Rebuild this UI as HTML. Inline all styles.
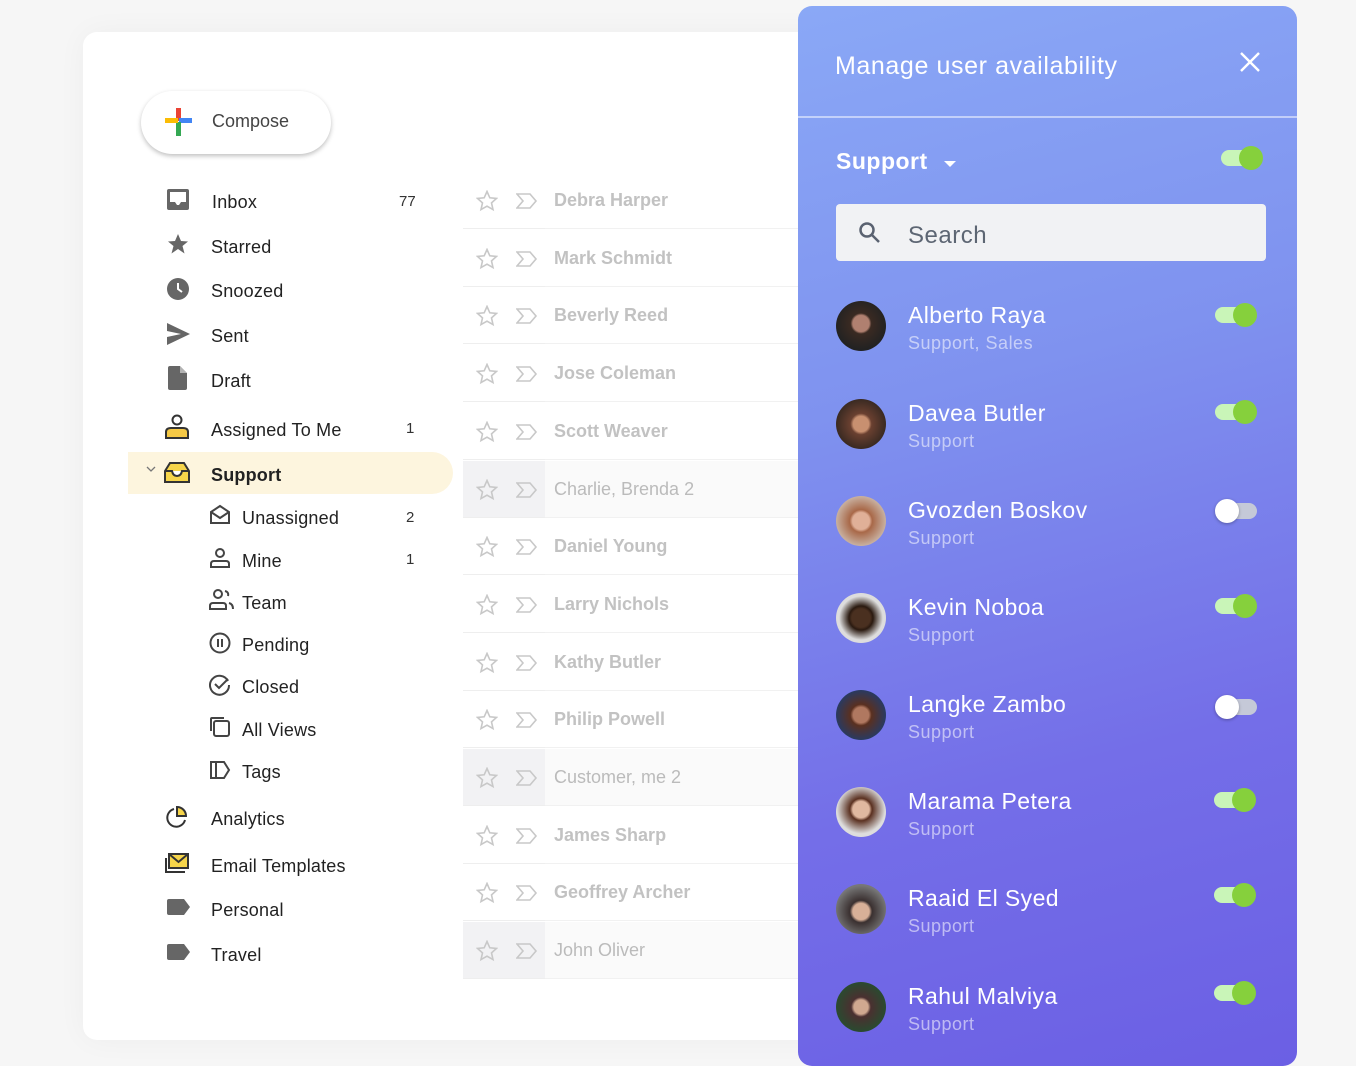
<!DOCTYPE html>
<html><head><meta charset="utf-8"><style>
*{box-sizing:border-box;margin:0;padding:0}
body{width:1356px;height:1062px;overflow:hidden;background:#f6f6f6;font-family:"Liberation Sans",Roboto,sans-serif;position:relative}
.card{position:absolute;left:83px;top:32px;width:760px;height:1008px;background:#fff;border-radius:14px;box-shadow:0 0 30px rgba(0,0,0,.04)}
.compose{position:absolute;left:141px;top:91px;width:190px;height:63px;border-radius:32px;background:#fff;box-shadow:0 2px 5px rgba(0,0,0,.25);font-size:18px;color:#444}
.compose span{position:absolute;left:71px;top:20px}
.nav{position:absolute;font-size:18px;color:#222;letter-spacing:.2px}
.ic{position:absolute}
.cnt{position:absolute;font-size:15px;color:#333}
.row{position:absolute;left:463px;width:335px;height:57px;border-bottom:1px solid #f1f1f1}
.row .l{position:absolute;left:0;top:0;width:82px;height:57px;border-bottom:1px solid #eee}
.row .t{position:absolute;left:91px;top:18px;font-size:18px;font-weight:bold;color:#c2c2c2}
.row.g{background:#fafafa}.row.g .l{background:#f2f2f4}.row.g .t{font-weight:normal;color:#bbb}
.panel{position:absolute;left:798px;top:6px;width:499px;height:1060px;border-radius:14px;background:linear-gradient(165deg,#8aa8f6 0%,#7f92ef 35%,#746ee8 70%,#6b5fe4 100%);overflow:hidden}
.user{position:absolute;left:38px;width:430px;height:60px}
.av{position:absolute;left:0;top:0;width:50px;height:50px;border-radius:50%;background:radial-gradient(circle at 50% 45%,#b08070 0 22%,#3a2a22 28%,#222 70%)}
.nm{position:absolute;left:72px;top:1px;font-size:23px;color:#fff;letter-spacing:.4px}
.sb{position:absolute;left:72px;top:31px;font-size:18px;color:rgba(255,255,255,.55);letter-spacing:.5px}
.tg{position:absolute;width:40px;height:16px;border-radius:8px;background:#c9f5b8}
.tg::after{content:"";position:absolute;right:-2px;top:-4px;width:24px;height:24px;border-radius:50%;background:#86d03c}
.tg.off{background:#c5c9d8}.tg.off::after{right:auto;left:-2px;background:#fff;box-shadow:0 1px 3px rgba(0,0,0,.3)}
</style></head><body>
<div class="card"></div>
<div class="compose">
<svg class="ic" style="left:24px;top:17px" width="28" height="28"><rect x="11" y="0" width="5" height="13" fill="#ea4335"/><rect x="14" y="10" width="13" height="5" fill="#4285f4"/><rect x="11" y="14" width="5" height="14" fill="#34a853"/><rect x="0" y="10" width="13" height="5" fill="#fbbc05"/></svg>
<span>Compose</span></div>

<div style="position:absolute;left:128px;top:452px;width:325px;height:42px;background:#fdf5de;border-radius:0 21px 21px 0"></div>

<svg class="ic" style="left:166px;top:188px" width="24" height="24"><rect x="1" y="1" width="22" height="21" rx="2" fill="#666"/><path d="M4 4h16v10h-5l-2 3h-2l-2-3H4z" fill="#fff"/></svg>
<div class="nav" style="left:212px;top:192px">Inbox</div><div class="cnt" style="left:399px;top:193px">77</div>
<svg class="ic" style="left:167px;top:233px" width="22" height="22"><path d="M11 1l3 7 7 .5-5.5 4.5 2 7.5L11 16l-6.5 4.5 2-7.5L1 8.5 8 8z" fill="#666"/></svg>
<div class="nav" style="left:211px;top:237px">Starred</div>
<svg class="ic" style="left:167px;top:278px" width="22" height="22"><circle cx="11" cy="11" r="11" fill="#666"/><path d="M11 5v6l4 3" stroke="#fff" stroke-width="2" fill="none"/></svg>
<div class="nav" style="left:211px;top:281px">Snoozed</div>
<svg class="ic" style="left:167px;top:323px" width="24" height="22"><path d="M0 0l23 11L0 22V14l14-3L0 8z" fill="#666"/></svg>
<div class="nav" style="left:211px;top:326px">Sent</div>
<svg class="ic" style="left:168px;top:366px" width="20" height="24"><path d="M0 2q0-2 2-2h10l7 7v15q0 2-2 2H2q-2 0-2-2z" fill="#666"/><path d="M12 0v7h7" fill="#fff" opacity=".5"/></svg>
<div class="nav" style="left:211px;top:371px">Draft</div>
<svg class="ic" style="left:164px;top:414px" width="26" height="26"><circle cx="13" cy="6" r="4.5" fill="none" stroke="#333" stroke-width="2"/><path d="M2 18q0-4 5-4h12q5 0 5 4v6H2z" fill="#f6c945" stroke="#333" stroke-width="2"/></svg>
<div class="nav" style="left:211px;top:420px">Assigned To Me</div><div class="cnt" style="left:406px;top:420px">1</div>
<svg class="ic" style="left:146px;top:466px" width="10" height="7"><path d="M1 1l4 4 4-4" stroke="#777" stroke-width="1.3" fill="none"/></svg>
<svg class="ic" style="left:163px;top:461px" width="28" height="24"><path d="M2 10l5-8h14l5 8v11H2z" fill="#f6d54a" stroke="#333" stroke-width="2"/><path d="M2 10h7q1 5 5 5t5-5h7" fill="#fff" stroke="#333" stroke-width="2"/></svg>
<div class="nav" style="left:211px;top:465px;font-weight:bold">Support</div>

<svg class="ic" style="left:209px;top:504px" width="22" height="22" fill="none" stroke="#444" stroke-width="2"><path d="M2 8l9-6 9 6v11H2z"/><path d="M2 8l9 6 9-6"/></svg>
<div class="nav" style="left:242px;top:508px">Unassigned</div><div class="cnt" style="left:406px;top:509px">2</div>
<svg class="ic" style="left:209px;top:548px" width="22" height="22" fill="none" stroke="#444" stroke-width="2"><circle cx="11" cy="5" r="4"/><path d="M2 19v-3q0-3 3-3h12q3 0 3 3v3z"/></svg>
<div class="nav" style="left:242px;top:551px">Mine</div><div class="cnt" style="left:406px;top:551px">1</div>
<svg class="ic" style="left:209px;top:589px" width="26" height="22" fill="none" stroke="#444" stroke-width="2"><circle cx="9" cy="5" r="4"/><path d="M1 20v-3q0-3 3-3h10q3 0 3 3v3z"/><path d="M16 2q4 1 3 5M20 14q4 1 4 6"/></svg>
<div class="nav" style="left:242px;top:593px">Team</div>
<svg class="ic" style="left:209px;top:632px" width="22" height="22" fill="none" stroke="#444" stroke-width="2"><circle cx="11" cy="11" r="9.5"/><path d="M9 7v8M13 7v8"/></svg>
<div class="nav" style="left:242px;top:635px">Pending</div>
<svg class="ic" style="left:209px;top:674px" width="22" height="22" fill="none" stroke="#444" stroke-width="2"><path d="M19 7A9.5 9.5 0 1 0 20 11"/><path d="M6 10l4 4 9-9"/></svg>
<div class="nav" style="left:242px;top:677px">Closed</div>
<svg class="ic" style="left:209px;top:716px" width="22" height="22" fill="none" stroke="#444" stroke-width="2"><rect x="5" y="5" width="15" height="15" rx="2"/><path d="M2 15V3q0-1 1-1h12"/></svg>
<div class="nav" style="left:242px;top:720px">All Views</div>
<svg class="ic" style="left:209px;top:760px" width="22" height="20" fill="none" stroke="#444" stroke-width="2"><path d="M2 2h13l5 8-5 8H2z"/><path d="M7 2v16"/></svg>
<div class="nav" style="left:242px;top:762px">Tags</div>
<svg class="ic" style="left:165px;top:805px" width="24" height="24"><path d="M12 2a9 9 0 0 1 9 9h-9z" fill="#f6d54a" stroke="#333" stroke-width="2"/><path d="M9 4A9 9 0 1 0 20 15" fill="none" stroke="#333" stroke-width="2"/></svg>
<div class="nav" style="left:211px;top:809px">Analytics</div>
<svg class="ic" style="left:164px;top:852px" width="26" height="22"><path d="M2 6v14h19" fill="none" stroke="#333" stroke-width="2"/><rect x="5" y="2" width="19" height="14" fill="#f6d54a" stroke="#333" stroke-width="2"/><path d="M5 2l9.5 8L24 2" fill="none" stroke="#333" stroke-width="2"/></svg>
<div class="nav" style="left:211px;top:856px">Email Templates</div>
<svg class="ic" style="left:167px;top:899px" width="24" height="18"><path d="M0 2q0-2 2-2h15l6 8-6 8H2q-2 0-2-2z" fill="#666"/></svg>
<div class="nav" style="left:211px;top:900px">Personal</div>
<svg class="ic" style="left:167px;top:944px" width="24" height="18"><path d="M0 2q0-2 2-2h15l6 8-6 8H2q-2 0-2-2z" fill="#666"/></svg>
<div class="nav" style="left:211px;top:945px">Travel</div>

<div id="rows"></div>
<script>
var n=["Debra Harper","Mark Schmidt","Beverly Reed","Jose Coleman","Scott Weaver","Charlie, Brenda 2","Daniel Young","Larry Nichols","Kathy Butler","Philip Powell","Customer, me 2","James Sharp","Geoffrey Archer","John Oliver"];
var g=[5,10,13],h="";
n.forEach(function(t,i){var y=172+i*57.7;h+='<div class="row'+(g.indexOf(i)>=0?' g':'')+'" style="top:'+y+'px"><div class="l"></div><svg style="position:absolute;left:13px;top:18px" width="22" height="22"><path d="M11 1.5l2.8 6.3 6.7.6-5 4.5 1.5 6.7L11 16.2l-6 3.4 1.5-6.7-5-4.5 6.7-.6z" fill="none" stroke="#c8c8c8" stroke-width="1.6"/></svg><svg style="position:absolute;left:53px;top:21px" width="22" height="16"><path d="M1 1h13l6 7-6 7H1l6-7z" fill="none" stroke="#c8c8c8" stroke-width="1.6"/></svg><div class="t">'+t+'</div></div>'});
document.getElementById("rows").innerHTML=h;
</script>

<div class="panel">
<div style="position:absolute;left:37px;top:46px;font-size:25px;color:#fff;letter-spacing:.6px">Manage user availability</div>
<svg style="position:absolute;left:442px;top:46px" width="20" height="20" stroke="#fff" stroke-width="2.4"><path d="M1 1l18 18M19 1L1 19"/></svg>
<div style="position:absolute;left:0;top:110px;width:499px;height:2px;background:rgba(255,255,255,.5)"></div>
<div style="position:absolute;left:38px;top:142px;font-size:23px;font-weight:bold;color:#fff;letter-spacing:.5px">Support</div>
<div style="position:absolute;left:146px;top:155px;border-left:6px solid transparent;border-right:6px solid transparent;border-top:6px solid #fff"></div>
<div class="tg" style="left:423px;top:144px"></div>
<div style="position:absolute;left:38px;top:198px;width:430px;height:57px;background:#f1f2f4;border-radius:4px"></div>
<svg style="position:absolute;left:61px;top:216px" width="22" height="22" fill="none" stroke="#5a6270" stroke-width="2.5"><circle cx="8" cy="8" r="6.5"/><path d="M13 13l7 7"/></svg>
<div style="position:absolute;left:110px;top:216px;font-size:24px;color:#5d6673;letter-spacing:.5px">Search</div>

<div class="user" style="top:295px"><div class="av"></div><div class="nm">Alberto Raya</div><div class="sb" style="top:32px">Support, Sales</div><div class="tg" style="left:379px;top:6px"></div></div>
<div class="user" style="top:393px"><div class="av" style="background:radial-gradient(circle at 50% 50%,#c89070 0 22%,#6a4030 30%,#3a2a22 70%)"></div><div class="nm">Davea Butler</div><div class="sb" style="top:32px">Support</div><div class="tg" style="left:379px;top:5px"></div></div>
<div class="user" style="top:490px"><div class="av" style="background:radial-gradient(circle at 50% 50%,#e0b098 0 24%,#a86848 32%,#c8b0a0 70%)"></div><div class="nm">Gvozden Boskov</div><div class="sb" style="top:32px">Support</div><div class="tg off" style="left:381px;top:7px"></div></div>
<div class="user" style="top:587px"><div class="av" style="background:radial-gradient(circle at 50% 50%,#4a3020 0 26%,#2a1a10 34%,#ddd 62%)"></div><div class="nm">Kevin Noboa</div><div class="sb" style="top:32px">Support</div><div class="tg" style="left:379px;top:5px"></div></div>
<div class="user" style="top:684px"><div class="av" style="background:radial-gradient(circle at 50% 50%,#b07860 0 22%,#5a3020 30%,#2a3a60 70%)"></div><div class="nm">Langke Zambo</div><div class="sb" style="top:32px">Support</div><div class="tg off" style="left:381px;top:9px"></div></div>
<div class="user" style="top:781px"><div class="av" style="background:radial-gradient(circle at 50% 45%,#e0b8a0 0 22%,#5a3020 30%,#ddd 65%)"></div><div class="nm">Marama Petera</div><div class="sb" style="top:32px">Support</div><div class="tg" style="left:378px;top:5px"></div></div>
<div class="user" style="top:878px"><div class="av" style="background:radial-gradient(circle at 50% 55%,#d8b098 0 22%,#3a3030 30%,#777 70%)"></div><div class="nm">Raaid El Syed</div><div class="sb" style="top:32px">Support</div><div class="tg" style="left:378px;top:3px"></div></div>
<div class="user" style="top:976px"><div class="av" style="background:radial-gradient(circle at 50% 50%,#d0a890 0 20%,#4a3030 28%,#2a4a30 70%)"></div><div class="nm">Rahul Malviya</div><div class="sb" style="top:32px">Support</div><div class="tg" style="left:378px;top:3px"></div></div>
</div>
</body></html>
